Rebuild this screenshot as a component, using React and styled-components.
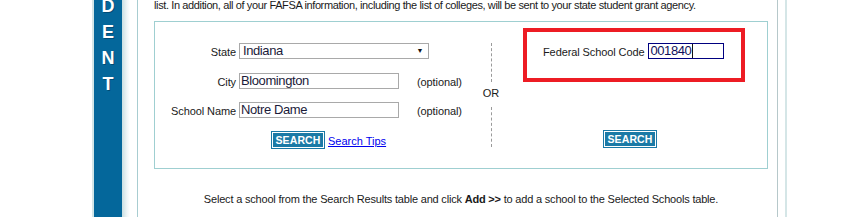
import React from "react";
import styled, { createGlobalStyle } from "styled-components";

const Global = createGlobalStyle`
  html, body { margin: 0; padding: 0; background: #fff; }
  body { font-family: "Liberation Sans", Arial, sans-serif; color: #1a1a1a; }
`;

const Page = styled.div`
  display: flex;
  height: 217px;
  overflow: hidden;
  background: #fff;
`;

const LeftGap = styled.div`
  width: 92px;
  flex: none;
`;

const SideBar = styled.div`
  width: 28px;
  flex: none;
  background: #04679b;
  border-left: 2px solid #d3e6e8;
  display: flex;
  flex-direction: column;
  align-items: center;
  overflow: hidden;
`;

const Letter = styled.div`
  font-family: "Liberation Sans", Arial, sans-serif;
  font-weight: bold;
  font-size: 18px;
  line-height: 26px;
  height: 26px;
  flex: none;
  color: #fff;
  text-shadow: 1px 1px 0 rgba(0, 40, 70, 0.45);
  &:first-child { margin-top: -7px; }
`;

const Shade = styled.div`
  width: 8px;
  flex: none;
  background: linear-gradient(to right, #c9dfe2, #eef5f6 60%, #fff);
  margin-right: 7px;
`;

const Main = styled.div`
  width: 641px;
  flex: none;
  border-left: 1px solid #a8cdd1;
  border-right: 1px solid #b6c8ca;
  padding-left: 16px;
  box-sizing: border-box;
`;

const RightBand = styled.div`
  width: 2px;
  flex: none;
  margin-left: 7px;
  background: #d5e6e7;
`;

const Intro = styled.p`
  margin: -1px 0 0 0;
  font-size: 11px;
  line-height: 13px;
  letter-spacing: -0.38px;
  white-space: nowrap;
  color: #1a1a1a;
`;

const SearchBox = styled.div`
  margin-top: 9px;
  width: 614px;
  height: 148px;
  box-sizing: border-box;
  border: 1px solid #9fcfd1;
  display: grid;
  grid-template-columns: 329px 14px 1fr;
`;

const Form = styled.div`
  padding-top: 21px;
  display: flex;
  flex-direction: column;
`;

const FormRow = styled.div`
  display: grid;
  grid-template-columns: 81px auto 1fr;
  column-gap: 3px;
  align-items: end;
  height: 16px;
  margin-bottom: ${(p) => p.$gap}px;
`;

const Label = styled.span`
  font-size: 11px;
  line-height: 13px;
  text-align: right;
  white-space: nowrap;
  letter-spacing: -0.1px;
  color: #1a1a1a;
`;

const FieldBox = styled.div`
  box-sizing: border-box;
  width: ${(p) => p.$w}px;
  height: 16px;
  border: 1px solid ${(p) => p.$border || "#a9a9a9"};
  background: #fff;
  display: flex;
  align-items: center;
  padding-left: ${(p) => p.$pl || 1}px;
  font-size: 13px;
  line-height: 14px;
  letter-spacing: -0.4px;
  color: ${(p) => p.$color || "#1b1b3a"};
  white-space: nowrap;
  overflow: hidden;
`;

const Arrow = styled.span`
  margin-left: auto;
  margin-right: 5px;
  font-size: 7px;
  color: #111;
`;

const Optional = styled.span`
  font-size: 11px;
  line-height: 13px;
  padding-left: 15px;
  letter-spacing: -0.1px;
  color: #1a1a1a;
`;

const ButtonRow = styled.div`
  display: flex;
  align-items: center;
  gap: 4px;
  padding-left: ${(p) => p.$pl}px;
  margin-top: ${(p) => p.$mt || 0}px;
`;

const SearchButton = styled.button`
  box-sizing: border-box;
  width: 52px;
  height: 16px;
  padding: 0;
  background: #1b7aa6;
  border: 1px solid #fff;
  outline: 1px solid #1a79a6;
  color: #fff;
  font-family: "Liberation Sans", Arial, sans-serif;
  font-weight: bold;
  font-size: 10.5px;
  letter-spacing: 0.1px;
  line-height: 14px;
  cursor: pointer;
  flex: none;
`;

const TipLink = styled.a`
  font-size: 11px;
  line-height: 13px;
  color: #0000ee;
  text-decoration: underline;
  margin-top: 3px;
`;

const Divider = styled.div`
  display: flex;
  flex-direction: column;
  align-items: center;
  padding-top: 21px;
`;

const Dash = styled.div`
  width: 0;
  height: ${(p) => p.$h}px;
  border-left: 1px dashed #9a9a9a;
`;

const OrText = styled.span`
  font-size: 11px;
  line-height: 13px;
  margin: 5px 0 7px;
  color: #1a1a1a;
`;

const CodeSide = styled.div`
  padding-top: 6px;
  display: flex;
  flex-direction: column;
`;

const Highlight = styled.div`
  margin-left: 25px;
  width: 222px;
  height: 54px;
  box-sizing: border-box;
  border: 4px solid #ed1c24;
  padding: 11px 0 0 16px;
  display: flex;
  align-items: flex-start;
`;

const HighlightRow = styled.div`
  display: flex;
  align-items: flex-end;
  gap: 4px;
  height: 16px;
`;

const Caret = styled.span`
  display: inline-block;
  width: 1px;
  height: 14px;
  background: #111;
  margin-left: 1px;
`;

const Footer = styled.p`
  margin: 24px 0 0 0;
  width: 614px;
  text-align: center;
  font-size: 11px;
  line-height: 13px;
  letter-spacing: -0.19px;
  white-space: nowrap;
  color: #1a1a1a;
  b { font-weight: bold; }
`;

export default function App() {
  return (
    <>
      <Global />
      <Page>
        <LeftGap />
        <SideBar>
          {["D", "E", "N", "T"].map((l, i) => (
            <Letter key={i}>{l}</Letter>
          ))}
        </SideBar>
        <Shade />
        <Main>
          <Intro>
            list. In addition, all of your FAFSA information, including the list of colleges, will be sent to your state student grant agency.
          </Intro>
          <SearchBox>
            <Form>
              <FormRow $gap={14}>
                <Label>State</Label>
                <FieldBox $w={190} $pl={3}>
                  Indiana
                  <Arrow>▼</Arrow>
                </FieldBox>
                <span />
              </FormRow>
              <FormRow $gap={13}>
                <Label>City</Label>
                <FieldBox $w={160}>Bloomington</FieldBox>
                <Optional>(optional)</Optional>
              </FormRow>
              <FormRow $gap={14}>
                <Label>School Name</Label>
                <FieldBox $w={160}>Notre Dame</FieldBox>
                <Optional>(optional)</Optional>
              </FormRow>
              <ButtonRow $pl={117}>
                <SearchButton>SEARCH</SearchButton>
                <TipLink href="#">Search Tips</TipLink>
              </ButtonRow>
            </Form>
            <Divider>
              <Dash $h={39} />
              <OrText>OR</OrText>
              <Dash $h={40} />
            </Divider>
            <CodeSide>
              <Highlight>
                <HighlightRow>
                  <Label>Federal School Code</Label>
                  <FieldBox $w={76} $border="#000080" $color="#10105a">
                    001840
                    <Caret />
                  </FieldBox>
                </HighlightRow>
              </Highlight>
              <ButtonRow $pl={106} $mt={49}>
                <SearchButton>SEARCH</SearchButton>
              </ButtonRow>
            </CodeSide>
          </SearchBox>
          <Footer>
            Select a school from the Search Results table and click <b>Add &gt;&gt;</b> to add a school to the Selected Schools table.
          </Footer>
        </Main>
        <RightBand />
      </Page>
    </>
  );
}
